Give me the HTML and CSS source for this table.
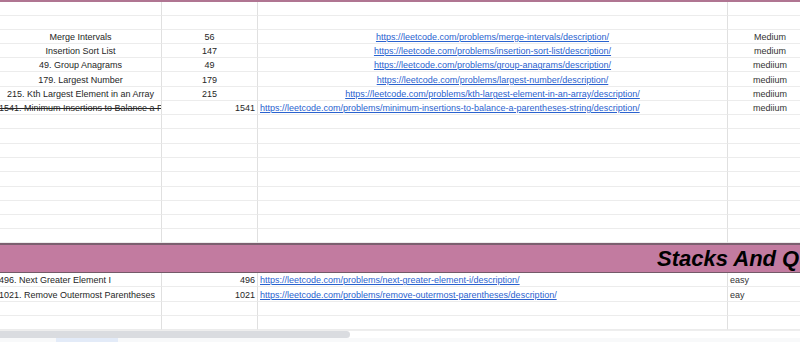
FILE: index.html
```html
<!DOCTYPE html>
<html>
<head>
<meta charset="utf-8">
<link rel="stylesheet" href="styles.css">
</head>
<body>
<div class="page">
  <div class="topline"></div>
  <div class="sheet">
    <div class="row"><div class="cell"></div><div class="cell"></div><div class="cell"></div><div class="cell"></div></div>
    <div class="row"><div class="cell"></div><div class="cell"></div><div class="cell"></div><div class="cell"></div></div>
    <div class="row"><div class="cell c">Merge Intervals</div><div class="cell c">56</div><div class="cell c"><a class="link">https://leetcode.com/problems/merge-intervals/description/</a></div><div class="cell c diff">Medium</div></div>
    <div class="row"><div class="cell c">Insertion Sort List</div><div class="cell c">147</div><div class="cell c"><a class="link">https://leetcode.com/problems/insertion-sort-list/description/</a></div><div class="cell c diff">medium</div></div>
    <div class="row"><div class="cell c">49. Group Anagrams</div><div class="cell c">49</div><div class="cell c"><a class="link">https://leetcode.com/problems/group-anagrams/description/</a></div><div class="cell c diff">mediium</div></div>
    <div class="row tall"><div class="cell c">179. Largest Number</div><div class="cell c">179</div><div class="cell c"><a class="link">https://leetcode.com/problems/largest-number/description/</a></div><div class="cell c diff">mediium</div></div>
    <div class="row"><div class="cell c">215. Kth Largest Element in an Array</div><div class="cell c">215</div><div class="cell c"><a class="link">https://leetcode.com/problems/kth-largest-element-in-an-array/description/</a></div><div class="cell c diff">mediium</div></div>
    <div class="row"><div class="cell l strike"><span class="shift">1541. Minimum Insertions to Balance a Parentheses String</span></div><div class="cell r">1541</div><div class="cell l"><a class="link">https://leetcode.com/problems/minimum-insertions-to-balance-a-parentheses-string/description/</a></div><div class="cell c diff">mediium</div></div>
    <div class="row"><div class="cell"></div><div class="cell"></div><div class="cell"></div><div class="cell"></div></div>
    <div class="row tall"><div class="cell"></div><div class="cell"></div><div class="cell"></div><div class="cell"></div></div>
    <div class="row"><div class="cell"></div><div class="cell"></div><div class="cell"></div><div class="cell"></div></div>
    <div class="row"><div class="cell"></div><div class="cell"></div><div class="cell"></div><div class="cell"></div></div>
    <div class="row tall"><div class="cell"></div><div class="cell"></div><div class="cell"></div><div class="cell"></div></div>
    <div class="row"><div class="cell"></div><div class="cell"></div><div class="cell"></div><div class="cell"></div></div>
    <div class="row"><div class="cell"></div><div class="cell"></div><div class="cell"></div><div class="cell"></div></div>
    <div class="row"><div class="cell"></div><div class="cell"></div><div class="cell"></div><div class="cell"></div></div>
    <div class="row"><div class="cell"></div><div class="cell"></div><div class="cell"></div><div class="cell"></div></div>

    <div class="band"><span class="band-title">Stacks And Queues</span></div>

    <div class="row"><div class="cell l"><span class="shift1">496. Next Greater Element I</span></div><div class="cell r">496</div><div class="cell l"><a class="link">https://leetcode.com/problems/next-greater-element-i/description/</a></div><div class="cell l diff">easy</div></div>
    <div class="row tall"><div class="cell l"><span class="shift1">1021. Remove Outermost Parentheses</span></div><div class="cell r">1021</div><div class="cell l"><a class="link">https://leetcode.com/problems/remove-outermost-parentheses/description/</a></div><div class="cell l diff">eay</div></div>
    <div class="row"><div class="cell"></div><div class="cell"></div><div class="cell"></div><div class="cell"></div></div>
    <div class="row"><div class="cell"></div><div class="cell"></div><div class="cell"></div><div class="cell"></div></div>
  </div>
  <div class="scrollbar"><div class="thumb"></div></div>
  <div class="tabs"><div class="tab"></div></div>
</div>
</body>
</html>
```

FILE: styles.css
```css
html, body {
  margin: 0;
  padding: 0;
  background: #ffffff;
  overflow: hidden;
}
.page {
  width: 800px;
  height: 342px;
  overflow: hidden;
  font-family: "Liberation Sans", Arial, sans-serif;
  font-size: 9px;
  color: #262626;
}
.topline {
  height: 2px;
  background: #b07592;
}
.sheet {
  width: 813px;
}
.row {
  display: grid;
  grid-template-columns: 162px 96px 470px 85px;
  height: 14px;
}
.row.tall {
  height: 15px;
}
.cell {
  box-sizing: border-box;
  border-right: 1px solid #e0e0e0;
  border-bottom: 1px solid #ececec;
  display: flex;
  align-items: center;
  padding-top: 1px;
  white-space: nowrap;
  overflow: hidden;
  line-height: 12px;
}
.cell.c {
  justify-content: center;
}
.cell.l {
  justify-content: flex-start;
  padding-left: 2px;
}
.cell.r {
  justify-content: flex-end;
  padding-right: 2px;
}
.cell.strike {
  padding-left: 0;
  text-decoration: line-through;
}
.shift {
  margin-left: -1px;
}
.shift1 {
  margin-left: -3px;
}
.diff {
  color: #333333;
}
.link {
  color: #2a62cf;
  text-decoration: underline;
}
.band {
  box-sizing: border-box;
  height: 30px;
  background: #c27ba0;
  border-top: 2px solid #7b5f6f;
  border-bottom: 1px solid #735a68;
  display: flex;
  align-items: center;
  padding-left: 657px;
  white-space: nowrap;
  overflow: hidden;
}
.band-title {
  font-size: 22px;
  font-weight: bold;
  font-style: italic;
  color: #000000;
  line-height: 26px;
}
.scrollbar {
  height: 8px;
  box-sizing: border-box;
  border-top: 1px solid #eeeeee;
  background: #ffffff;
  display: flex;
  align-items: stretch;
}
.thumb {
  width: 350px;
  background: #dadce0;
  border-radius: 0 4px 4px 0;
}
.tabs {
  height: 4px;
  background: #f8f9fa;
  display: flex;
  padding-left: 56px;
}
.tab {
  width: 62px;
  background: #e3ebf8;
}
```
